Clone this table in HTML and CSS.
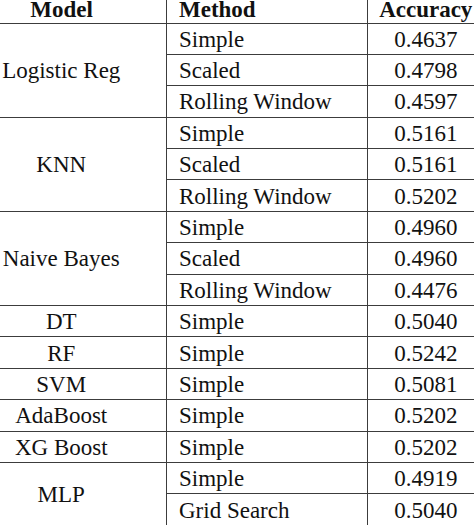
FILE: index.html
```html
<!DOCTYPE html>
<html>
<head>
<meta charset="utf-8">
<link rel="stylesheet" href="styles.css">
</head>
<body>
<table class="results">
  <colgroup>
    <col class="c-model">
    <col class="c-method">
    <col class="c-acc">
  </colgroup>
  <thead>
    <tr class="head">
      <th class="model">Model</th>
      <th class="method">Method</th>
      <th class="acc">Accuracy</th>
    </tr>
  </thead>
  <tbody>
    <tr><td class="model" rowspan="3">Logistic Reg</td><td class="method">Simple</td><td class="acc">0.4637</td></tr>
    <tr><td class="method">Scaled</td><td class="acc">0.4798</td></tr>
    <tr><td class="method">Rolling Window</td><td class="acc">0.4597</td></tr>
    <tr><td class="model" rowspan="3">KNN</td><td class="method">Simple</td><td class="acc">0.5161</td></tr>
    <tr><td class="method">Scaled</td><td class="acc">0.5161</td></tr>
    <tr><td class="method">Rolling Window</td><td class="acc">0.5202</td></tr>
    <tr><td class="model" rowspan="3">Naive Bayes</td><td class="method">Simple</td><td class="acc">0.4960</td></tr>
    <tr><td class="method">Scaled</td><td class="acc">0.4960</td></tr>
    <tr><td class="method">Rolling Window</td><td class="acc">0.4476</td></tr>
    <tr><td class="model">DT</td><td class="method">Simple</td><td class="acc">0.5040</td></tr>
    <tr><td class="model">RF</td><td class="method">Simple</td><td class="acc">0.5242</td></tr>
    <tr><td class="model">SVM</td><td class="method">Simple</td><td class="acc">0.5081</td></tr>
    <tr><td class="model">AdaBoost</td><td class="method">Simple</td><td class="acc">0.5202</td></tr>
    <tr><td class="model">XG Boost</td><td class="method">Simple</td><td class="acc">0.5202</td></tr>
    <tr><td class="model" rowspan="2">MLP</td><td class="method">Simple</td><td class="acc">0.4919</td></tr>
    <tr><td class="method">Grid Search</td><td class="acc">0.5040</td></tr>
  </tbody>
</table>
</body>
</html>
```
FILE: styles.css
```css
html, body {
  margin: 0;
  padding: 0;
  background: #fff;
  overflow: hidden;
}

.results {
  margin-left: -44px;
  border-collapse: collapse;
  table-layout: fixed;
  width: 527px;
  font-family: "Liberation Serif", "Times New Roman", serif;
  font-size: 23px;
  color: #111;
}

.c-model { width: 210px; }
.c-method { width: 201px; }
.c-acc { width: 116px; }

.results th,
.results td {
  padding: 0;
  border: 1.5px solid #3c3c3c;
  border-top: none;
  white-space: nowrap;
  line-height: 26px;
}

.results tr.head {
  height: 23px;
}

.results tr.head th {
  font-weight: bold;
  vertical-align: top;
  padding-top: 0;
  line-height: 20px;
  border-left: 1.5px solid #3c3c3c;
}

.results tbody tr {
  height: 31.4px;
}

.results td {
  vertical-align: middle;
  padding-top: 2px;
}

.results .model {
  text-align: center;
  border-left: none;
}

.results .method {
  text-align: left;
  padding-left: 12px;
}

.results .acc {
  text-align: center;
  border-right: none;
}
```
